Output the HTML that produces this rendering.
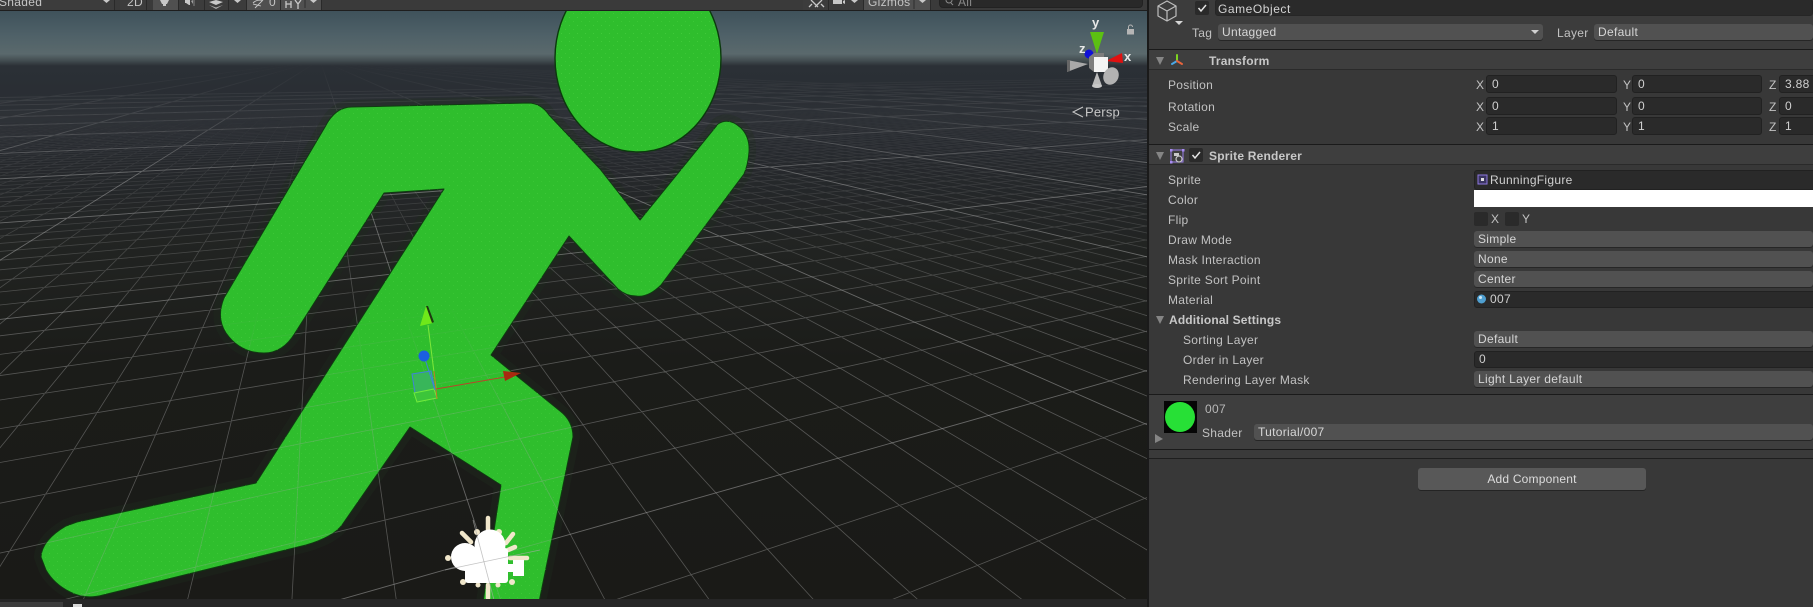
<!DOCTYPE html>
<html><head><meta charset="utf-8">
<style>
html,body{margin:0;padding:0;background:#383838;}
#r{position:relative;width:1813px;height:607px;overflow:hidden;background:#282828;font-family:"Liberation Sans",sans-serif;font-size:12px;color:#c2c2c2;letter-spacing:.3px;}
#r div{position:absolute;box-sizing:border-box;}
.t{height:16px;line-height:16px;white-space:nowrap;}
.b{font-weight:bold;letter-spacing:.2px;color:#c8c8c8;}
.f{background:#2a2a2a;border:1px solid #212121;border-radius:3px;color:#d0d0d0;line-height:15px;padding-left:5px;white-space:nowrap;}
.d{background:#515151;border-radius:3px;color:#d6d6d6;line-height:17px;padding-left:4px;white-space:nowrap;box-shadow:0 1px 0 #262626;}
.tb{background:#3c3c3c;top:0;height:10px;border-right:1px solid #2a2a2a;}
svg{position:absolute;display:block;overflow:hidden;}
</style></head><body>
<div id="r">

<svg width="1147" height="588" viewBox="0 11 1147 588" style="left:0;top:11px">
<defs>
<linearGradient id="sky" x1="0" y1="11" x2="0" y2="66" gradientUnits="userSpaceOnUse">
<stop offset="0" stop-color="#3f525b"/><stop offset=".45" stop-color="#4f6168"/><stop offset=".78" stop-color="#5a696c"/><stop offset=".9" stop-color="#434d51"/><stop offset="1" stop-color="#2b3036"/></linearGradient>
<linearGradient id="gnd" x1="0" y1="66" x2="0" y2="600" gradientUnits="userSpaceOnUse">
<stop offset="0" stop-color="#2b3036"/><stop offset=".15" stop-color="#272a2f"/><stop offset=".35" stop-color="#212321"/><stop offset=".55" stop-color="#1b1c19"/><stop offset="1" stop-color="#1a1a17"/></linearGradient>
<linearGradient id="gm1" x1="0" y1="62" x2="0" y2="400" gradientUnits="userSpaceOnUse">
<stop offset="0" stop-color="#000"/><stop offset=".08" stop-color="#000"/><stop offset=".2" stop-color="#2a2a2a"/><stop offset=".4" stop-color="#707070"/><stop offset=".8" stop-color="#fff"/></linearGradient>
<linearGradient id="gm2" x1="0" y1="62" x2="0" y2="180" gradientUnits="userSpaceOnUse">
<stop offset="0" stop-color="#000"/><stop offset=".2" stop-color="#222"/><stop offset=".5" stop-color="#666"/><stop offset="1" stop-color="#fff"/></linearGradient>
<mask id="m1" maskUnits="userSpaceOnUse" x="0" y="0" width="1147" height="600"><rect width="1147" height="600" fill="url(#gm1)"/></mask>
<mask id="m2" maskUnits="userSpaceOnUse" x="0" y="0" width="1147" height="600"><rect width="1147" height="600" fill="url(#gm2)"/></mask>
<linearGradient id="ov" x1="0" y1="300" x2="0" y2="420" gradientUnits="userSpaceOnUse">
<stop offset="0" stop-color="#000"/><stop offset="1" stop-color="#fff"/></linearGradient>
<mask id="m3" maskUnits="userSpaceOnUse" x="0" y="0" width="1147" height="600"><rect width="1147" height="600" fill="url(#ov)"/></mask>
<path id="fig" d="M352 107 L528 103 Q541 103 549 115 L600 169 L640 220 L718 124 Q729 117 741 128 Q750 137 749 152 Q748 165 744 174 L661 285 Q648 298 636 296 Q626 296 618 289 L569 236 L491 355 L560 411 Q573 421 573 437 L539 602 L483 602 L501 485 L410 427 L342 525 Q333 537 306 545 L103 595 Q85 600 70 592 Q54 584 46 570 L41 557 Q42 540 66 526 L77 522 L256 483 L444 189 L384 193 L295 333 Q283 353 264 353 Q240 353 226 333 Q216 318 224 298 L325 127 Q335 107 352 107 Z"/>
<clipPath id="figc"><use href="#fig"/></clipPath>
<pattern id="sp" width="8" height="8" patternUnits="userSpaceOnUse"><rect x="1" y="1" width="1" height="1" fill="#52d648" opacity=".5"/><rect x="5" y="5" width="1" height="1" fill="#52d648" opacity=".35"/></pattern>
</defs>
<rect x="0" y="0" width="1147" height="66" fill="url(#sky)"/>
<rect x="0" y="66" width="1147" height="534" fill="url(#gnd)"/>
<use href="#fig" fill="none" stroke="#1e2a1d" stroke-width="14" stroke-linejoin="round" opacity=".4"/>
<g id="gridMinor" mask="url(#m1)" stroke="#a8a8a8" stroke-width=".8" stroke-opacity=".42" fill="none"></g>
<g id="gridMajor" mask="url(#m2)" stroke="#b0b0b0" stroke-width=".9" stroke-opacity=".5" fill="none"></g>
<ellipse cx="638" cy="58" rx="83" ry="94" fill="#2fbe2d" stroke="#0b3a0d" stroke-width="1.4"/>
<use href="#fig" fill="#2fbe2d" stroke="#0e3d10" stroke-width="1" stroke-linejoin="round"/>
<ellipse cx="638" cy="58" rx="82" ry="93" fill="url(#sp)"/>
<use href="#fig" fill="url(#sp)" opacity=".8"/>
<g clip-path="url(#figc)"><g mask="url(#m3)"><path id="gridOver" fill="none" stroke="#a8a8a8" stroke-width=".8" stroke-opacity=".32"/></g></g>

<!-- origin gizmo -->
<polygon points="412,374 431,371 435,390 415,393" fill="#38b65a" stroke="#3f83d8" stroke-width="1"/>
<polygon points="414,393 434,389 437,398 417,402" fill="#3cc53a" stroke="#72ea3c" stroke-width="1"/>
<line x1="428" y1="325" x2="436" y2="388" stroke="#7de83a" stroke-width="1"/>
<line x1="424" y1="356" x2="435" y2="390" stroke="#3f83d8" stroke-width="1"/>
<line x1="436" y1="389" x2="505" y2="377" stroke="#b9452a" stroke-width="1"/>
<line x1="434" y1="371" x2="437" y2="399" stroke="#b97a2a" stroke-width="1"/>
<polygon points="426,306 420,326 433,323" fill="#6fe81a"/>
<polygon points="426,306 428,306 434,322 432,323" fill="#1e3a12"/>
<circle cx="424" cy="356" r="5.5" fill="#1b5fe0"/>
<polygon points="503,371 521,373 505,381" fill="#a82a10"/>

<!-- camera icon -->
<g fill="#f1e7cb" stroke="#f1e7cb" stroke-linecap="round">
<line x1="488" y1="518" x2="488" y2="535" stroke-width="4.500"/>
<line x1="462" y1="533" x2="471" y2="542" stroke-width="4.500"/>
<line x1="513" y1="534" x2="506" y2="543" stroke-width="4.500"/>
<line x1="515" y1="547" x2="508" y2="550" stroke-width="4.500"/>
<line x1="510" y1="558" x2="527" y2="558" stroke-width="4.500"/>
<line x1="488" y1="585" x2="488" y2="598" stroke-width="4.500"/>
<circle cx="477" cy="532" r="3" stroke="none"/><circle cx="499" cy="532" r="3" stroke="none"/><circle cx="448" cy="558" r="3" stroke="none"/><circle cx="463" cy="582" r="3" stroke="none"/><circle cx="512" cy="582" r="3" stroke="none"/><circle cx="478" cy="585" r="2.500" stroke="none"/><circle cx="498" cy="585" r="2.500" stroke="none"/>
</g>
<g fill="#fff"><circle cx="465" cy="557" r="14"/><circle cx="490" cy="545" r="15.500"/><rect x="465" y="548" width="43" height="35" rx="3"/><polygon points="505,564 513,564 513,560 524,560 524,576 513,576 513,572 505,572"/></g>
<line x1="445" y1="570" x2="540" y2="550" stroke="#aaa" stroke-width=".8" opacity=".7"/>
<line x1="473" y1="520" x2="494" y2="600" stroke="#aaa" stroke-width=".8" opacity=".7"/>

<!-- scene orientation gizmo -->
<polygon points="1067,60 1088,64 1067,72" fill="#a9a9a9"/>
<polygon points="1067,60 1070,60 1070,71 1067,72" fill="#666"/>
<polygon points="1090,32 1104,32 1097,54" fill="#5cc012"/>
<polygon points="1106,61 1122,53 1123,63" fill="#e01010"/>
<circle cx="1089" cy="54" r="4.5" fill="#1010d8"/>
<polygon points="1089,57 1094,53 1104,53 1104,58 1094,72 1089,68" fill="#7d7d7d"/>
<rect x="1094" y="57" width="14" height="15" fill="#f4f4f4"/>
<polygon points="1097,72 1092,86 1102,86" fill="#bcbcbc"/>
<ellipse cx="1097" cy="86" rx="5" ry="2" fill="#c8c8c8"/>
<ellipse cx="1111" cy="76" rx="7.5" ry="9" transform="rotate(25 1111 76)" fill="#b2b2b2"/>
<rect x="1127" y="29" width="7" height="5.5" fill="#b5b5b5"/>
<path d="M1128.5 29 v-2 a2 2 0 0 1 4 0" fill="none" stroke="#b5b5b5" stroke-width="1"/>
<text x="1092" y="27" font-family="Liberation Sans,sans-serif" font-size="13" font-weight="bold" fill="#e8e8e8">y</text>
<text x="1079" y="53" font-family="Liberation Sans,sans-serif" font-size="13" font-weight="bold" fill="#e8e8e8">z</text>
<text x="1124" y="61" font-family="Liberation Sans,sans-serif" font-size="13" font-weight="bold" fill="#e8e8e8">x</text>
<path d="M1083 107 L1073 112 L1083 117" fill="none" stroke="#c8c8c8" stroke-width="1"/>
<text x="1085" y="116.5" font-family="Liberation Sans,sans-serif" font-size="13" letter-spacing=".2" fill="#c8c8c8">Persp</text>
</svg>

<!-- scene toolbar -->
<div style="left:0;top:0;width:1147px;height:11px;background:#3a3a3a;border-bottom:1px solid #1e1e1e;overflow:hidden">
<div class="tb" style="left:0;width:115px"></div>
<div class="tb" style="left:120px;width:27px"></div>
<div class="tb" style="left:153px;width:26px;background:#505050"></div>
<div class="tb" style="left:179px;width:26px"></div>
<div class="tb" style="left:205px;width:24px"></div>
<div class="tb" style="left:229px;width:18px"></div>
<div class="tb" style="left:247px;width:34px;background:#505050"></div>
<div class="tb" style="left:281px;width:41px;background:#505050"></div>
<div class="tb" style="left:803px;width:26px"></div>
<div class="tb" style="left:829px;width:35px"></div>
<div class="tb" style="left:864px;width:67px;background:#505050"></div>
<div style="left:939px;top:-3px;width:204px;height:11px;background:#292929;border-radius:4px;border:1px solid #222"></div>
<div class="t" style="left:-1px;top:-6px;color:#c4c4c4">Shaded</div>
<div class="t" style="left:127px;top:-6px;color:#c4c4c4">2D</div>
<div class="t" style="left:868px;top:-6px;color:#c4c4c4">Gizmos</div>
<div class="t" style="left:958px;top:-6px;color:#8a8a8a">All</div>
<div class="t" style="left:269px;top:-6px;color:#c4c4c4">0</div>
</div>
<svg width="1147" height="11" style="left:0;top:0">
<g fill="#c8c8c8">
<polygon points="103,0 110,0 106.5,3"/><polygon points="234,0 241,0 237.5,3"/><polygon points="310,0 317,0 313.5,3"/><polygon points="919,0 926,0 922.5,3"/><polygon points="851,0 858,0 854.5,3"/>
<path d="M160 0h9l-2 4h-1v2h-3v-2h-1z"/>
<path d="M185 0h5v5h-1l-3-2h-1z"/><path d="M191 1l2 3v-4z" opacity=".7"/><path d="M194 0v6" stroke="#c8c8c8" opacity=".5"/>
<path d="M209 2l7-2 7 2-7 3z"/><path d="M209 5l7 2.500 7-2.500-7 4z" opacity=".8"/>
<path d="M833 0h9v4h-9z"/><path d="M843 1l2-1v4l-2-1z"/>
</g>
<g stroke="#c8c8c8" fill="none" stroke-width="1.3">
<path d="M811 0l7 7M822 0l-7 7M809 7l3-3M824 7l-3-3"/>
<path d="M253 3c3-3 6-3 9-3M253 4l8 2M255 8l8-8" stroke-width=".9"/>
<path d="M286 1v7M291 1v7M286 4h5M295 0l3 4 3-4M298 4v5"/>
<path d="M946 0a3 3 0 0 0 6 0M951 3l2 2" stroke="#8a8a8a" stroke-width="1"/>
</g>
<line x1="305" y1="0" x2="305" y2="8" stroke="#2e2e2e"/><line x1="914" y1="0" x2="914" y2="9" stroke="#2e2e2e"/>
</svg>

<!-- bottom strip -->
<div style="left:0;top:599px;width:1147px;height:8px;background:#262626"></div>
<div style="left:0;top:602px;width:63px;height:5px;background:#3c3c3c"></div>
<div style="left:73px;top:604px;width:9px;height:3px;background:#d8d8d8"></div>

<!-- divider -->
<div style="left:1147px;top:0;width:2px;height:607px;background:#1a1a1a"></div>

<!-- inspector -->
<div style="left:1149px;top:0;width:664px;height:607px;background:#383838"></div>
<div style="left:1149px;top:0;width:664px;height:49px;background:#3c3c3c"></div>
<div style="left:1149px;top:49px;width:664px;height:1px;background:#1a1a1a"></div>
<div style="left:1149px;top:50px;width:664px;height:20px;background:#3e3e3e;border-bottom:1px solid #2a2a2a"></div>
<div style="left:1149px;top:144px;width:664px;height:1px;background:#1a1a1a"></div>
<div style="left:1149px;top:145px;width:664px;height:20px;background:#3e3e3e;border-bottom:1px solid #2a2a2a"></div>
<div style="left:1149px;top:394px;width:664px;height:1px;background:#1a1a1a"></div>
<div style="left:1149px;top:395px;width:664px;height:54px;background:#3e3e3e"></div>
<div style="left:1149px;top:449px;width:664px;height:1px;background:#1a1a1a"></div>
<div style="left:1149px;top:450px;width:664px;height:8px;background:#3a3a3a"></div>
<div style="left:1149px;top:458px;width:664px;height:1px;background:#1e1e1e"></div>

<svg width="664" height="607" viewBox="1149 0 664 607" style="left:1149px;top:0">
<!-- cube -->
<g fill="none" stroke="#bdbdbd" stroke-width="1.2" stroke-linejoin="round"><path d="M1167 1l9 5v10l-9 5-9-5V6z"/><path d="M1158 6l9 5 9-5M1167 11v10"/></g>
<polygon points="1175,21 1183,21 1179,25" fill="#d6d6d6"/>
<!-- arrows -->
<g fill="#858585"><polygon points="1156,57 1164,57 1160,65"/><polygon points="1156,152 1164,152 1160,160"/><polygon points="1156,316 1164,316 1160,324"/><polygon points="1155,434 1163,439 1155,443"/></g>
<!-- transform icon -->
<g stroke-width="2" stroke-linecap="round"><line x1="1177" y1="60" x2="1177" y2="55" stroke="#7ed321"/><line x1="1177" y1="61" x2="1172" y2="64" stroke="#4aa8e8"/><line x1="1177" y1="61" x2="1182" y2="64" stroke="#e8643c"/></g>
<!-- sprite renderer icon -->
<rect x="1171" y="150" width="12" height="12" fill="none" stroke="#9a7fe8" stroke-width="1"/>
<g fill="#a78bf0"><rect x="1170" y="149" width="2.500" height="2.500"/><rect x="1182" y="149" width="2.500" height="2.500"/><rect x="1170" y="161" width="2.500" height="2.500"/></g>
<path d="M1174 153h5v3h-5z" fill="#c8c8c8"/><circle cx="1179" cy="159" r="3" fill="#3e3e3e" stroke="#c8c8c8" stroke-width="1.200"/>
</svg>

<!-- header row -->
<div style="left:1195px;top:1px;width:14px;height:14px;background:#2a2a2a;border-radius:2px"></div>
<svg width="14" height="14" style="left:1195px;top:1px"><path d="M3.500 7l2.500 3 5-6" fill="none" stroke="#e4e4e4" stroke-width="1.500"/></svg>
<div class="f" style="left:1215px;top:-1px;width:598px;height:17px;padding-top:1px;border-color:#262626"></div>
<div class="t" style="left:1218px;top:1px;color:#d4d4d4;letter-spacing:.55px">GameObject</div>
<div class="t" style="left:1192px;top:25px">Tag</div>
<div class="d" style="left:1218px;top:24px;width:325px;height:16px">Untagged</div>
<svg width="10" height="6" style="left:1530px;top:29px"><polygon points="1,1 9,1 5,5" fill="#d0d0d0"/></svg>
<div class="t" style="left:1557px;top:25px">Layer</div>
<div class="d" style="left:1594px;top:24px;width:219px;height:16px">Default</div>

<!-- transform -->
<div class="t b" style="left:1209px;top:53px">Transform</div>
<div class="t" style="left:1168px;top:77px">Position</div>
<div class="t" style="left:1168px;top:99px">Rotation</div>
<div class="t" style="left:1168px;top:119px">Scale</div>

<div class="t" style="left:1476px;top:77px">X</div><div class="f" style="left:1486px;top:75px;width:131px;height:18px;line-height:16px">0</div>
<div class="t" style="left:1623px;top:77px">Y</div><div class="f" style="left:1632px;top:75px;width:130px;height:18px;line-height:16px">0</div>
<div class="t" style="left:1769px;top:77px">Z</div><div class="f" style="left:1779px;top:75px;width:40px;height:18px;line-height:16px">3.88</div>
<div class="t" style="left:1476px;top:99px">X</div><div class="f" style="left:1486px;top:97px;width:131px;height:18px;line-height:16px">0</div>
<div class="t" style="left:1623px;top:99px">Y</div><div class="f" style="left:1632px;top:97px;width:130px;height:18px;line-height:16px">0</div>
<div class="t" style="left:1769px;top:99px">Z</div><div class="f" style="left:1779px;top:97px;width:40px;height:18px;line-height:16px">0</div>
<div class="t" style="left:1476px;top:119px">X</div><div class="f" style="left:1486px;top:117px;width:131px;height:18px;line-height:16px">1</div>
<div class="t" style="left:1623px;top:119px">Y</div><div class="f" style="left:1632px;top:117px;width:130px;height:18px;line-height:16px">1</div>
<div class="t" style="left:1769px;top:119px">Z</div><div class="f" style="left:1779px;top:117px;width:40px;height:18px;line-height:16px">1</div>

<!-- sprite renderer -->
<div style="left:1189px;top:148px;width:14px;height:14px;background:#2a2a2a;border-radius:2px"></div>
<svg width="14" height="14" style="left:1189px;top:148px"><path d="M3.500 7l2.500 3 5-6" fill="none" stroke="#e4e4e4" stroke-width="1.500"/></svg>
<div class="t b" style="left:1209px;top:148px;letter-spacing:.2px">Sprite Renderer</div>
<div class="t" style="left:1168px;top:172px">Sprite</div>
<div class="t" style="left:1168px;top:192px">Color</div>
<div class="t" style="left:1168px;top:212px">Flip</div>
<div class="t" style="left:1168px;top:232px">Draw Mode</div>
<div class="t" style="left:1168px;top:252px">Mask Interaction</div>
<div class="t" style="left:1168px;top:272px">Sprite Sort Point</div>
<div class="t" style="left:1168px;top:292px">Material</div>
<div class="t b" style="left:1169px;top:312px;letter-spacing:.15px">Additional Settings</div>
<div class="t" style="left:1183px;top:332px">Sorting Layer</div>
<div class="t" style="left:1183px;top:352px">Order in Layer</div>
<div class="t" style="left:1183px;top:372px">Rendering Layer Mask</div>

<div class="f" style="left:1474px;top:170px;width:345px;height:20px;padding-left:15px;line-height:18px;">RunningFigure</div>
<svg width="12" height="12" style="left:1477px;top:174px"><rect x="1" y="1" width="9" height="9" fill="#3a3560" stroke="#8f78e0"/><rect x="4" y="4" width="3" height="3" fill="#e0e0e0"/></svg>
<div style="left:1474px;top:190px;width:339px;height:17px;background:#fff"></div>
<div style="left:1474px;top:212px;width:14px;height:14px;background:#2a2a2a;border-radius:2px"></div>
<div class="t" style="left:1491px;top:211px">X</div>
<div style="left:1505px;top:212px;width:14px;height:14px;background:#2a2a2a;border-radius:2px"></div>
<div class="t" style="left:1522px;top:211px">Y</div>
<div class="d" style="left:1474px;top:231px;width:339px;height:16px">Simple</div>
<div class="d" style="left:1474px;top:251px;width:339px;height:16px">None</div>
<div class="d" style="left:1474px;top:271px;width:339px;height:16px">Center</div>
<div class="f" style="left:1474px;top:291px;width:345px;height:17px;padding-left:15px">007</div>
<svg width="12" height="12" style="left:1476px;top:293px"><circle cx="5.500" cy="6" r="4.500" fill="#4f9fd0"/><circle cx="4.500" cy="4.500" r="1.500" fill="#cfe8f5"/></svg>
<div class="d" style="left:1474px;top:331px;width:339px;height:16px">Default</div>
<div class="f" style="left:1474px;top:351px;width:345px;height:17px;padding-left:4px">0</div>
<div class="d" style="left:1474px;top:371px;width:339px;height:16px">Light Layer default</div>

<!-- material -->
<div style="left:1164px;top:401px;width:33px;height:32px;background:#060606"></div>
<svg width="33" height="32" style="left:1164px;top:401px"><ellipse cx="16" cy="16" rx="15" ry="15" fill="#27e036"/></svg>
<div class="t" style="left:1205px;top:401px;color:#b8b8b8">007</div>
<div class="t" style="left:1202px;top:425px">Shader</div>
<div class="d" style="left:1254px;top:424px;width:559px;height:16px">Tutorial/007</div>

<div style="left:1418px;top:468px;width:228px;height:22px;background:#585858;border-radius:3px;box-shadow:0 1px 0 #242424;text-align:center;line-height:22px;color:#dcdcdc;letter-spacing:.2px">Add Component</div>

<script>
(function(){
var ns="http://www.w3.org/2000/svg";
function seg(vx,x598){var e=1.03;return "M"+vx+" 60L"+(vx+(x598-vx)*e).toFixed(1)+" "+(60+538*e).toFixed(1);}
var minor="",major="",k;
for(k=-46;k<=112;k++){var x=500+104*k;var s=seg(320,x);if(((k%10)+10)%10==0)major+=s;else minor+=s;}
for(k=-112;k<=8;k++){var x2=346+275*k;var s2=seg(2240,x2);if(((k%10)+10)%10==0)major+=s2;else minor+=s2;}
var p1=document.createElementNS(ns,"path");p1.setAttribute("d",minor);document.getElementById("gridMinor").appendChild(p1);
var p2=document.createElementNS(ns,"path");p2.setAttribute("d",major);document.getElementById("gridMajor").appendChild(p2);
document.getElementById("gridOver").setAttribute("d",minor+major);
})();
</script>
</div>
</body></html>
